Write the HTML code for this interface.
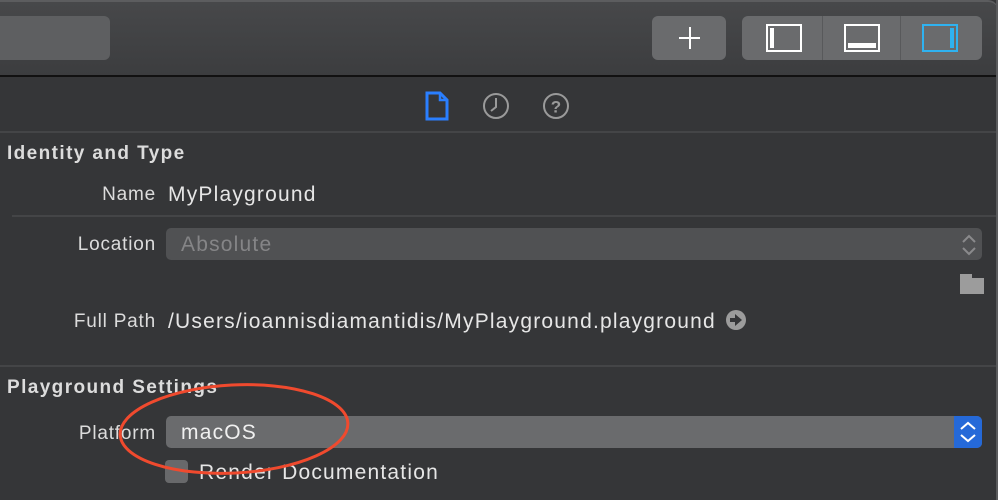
<!DOCTYPE html>
<html><head><meta charset="utf-8"><style>
*{margin:0;padding:0;box-sizing:border-box}
body{width:998px;height:500px;overflow:hidden;background:#353638;font-family:"Liberation Sans",sans-serif;position:relative;color:#dcdcdc}
.a{position:absolute}
.tb{left:0;top:0;width:998px;height:75px;background:linear-gradient(#47484a,#3c3d3f);border-top:2px solid #5c5d5f;border-top-right-radius:10px}
.btn{background:#6a6b6d;border-radius:6px}
.lbl{font-size:19px;letter-spacing:0.8px;color:#dcdcdc;text-align:right;width:156px;left:0}
.val{font-size:21px;letter-spacing:1.2px;color:#e6e6e6}
.hd{font-size:19px;letter-spacing:1.4px;font-weight:bold;color:#dcdcdc;left:7px}
.sep{height:2px;background:#444547}
</style></head><body>
<div class="a tb"></div>
<div class="a" style="left:0;top:75px;width:998px;height:2px;background:#111"></div>
<div class="a btn" style="left:-10px;top:16px;width:120px;height:44px;background:#5e5f61"></div>
<div class="a btn" style="left:652px;top:16px;width:74px;height:44px"></div>
<div class="a" style="left:679px;top:37px;width:21px;height:2px;background:#fff"></div>
<div class="a" style="left:688.5px;top:27px;width:2px;height:22px;background:#fff"></div>
<div class="a btn" style="left:742px;top:16px;width:240px;height:44px"></div>
<div class="a" style="left:822px;top:16px;width:1px;height:44px;background:#58595b"></div>
<div class="a" style="left:900px;top:16px;width:1px;height:44px;background:#58595b"></div>
<div class="a" style="left:766px;top:24px;width:36px;height:28px;border:2px solid #fff"></div>
<div class="a" style="left:770px;top:28px;width:4px;height:20px;background:#fff"></div>
<div class="a" style="left:844px;top:24px;width:36px;height:28px;border:2px solid #fff"></div>
<div class="a" style="left:848px;top:43px;width:28px;height:5px;background:#fff"></div>
<div class="a" style="left:922px;top:24px;width:36px;height:28px;border:2px solid #2fb2f0"></div>
<div class="a" style="left:950px;top:28px;width:4px;height:20px;background:#2fb2f0"></div>
<svg class="a" style="left:420px;top:88px" width="160" height="36">
<path d="M7 5 H20 L27 12 V31 H7 Z" fill="none" stroke="#2a7fff" stroke-width="3"/>
<path d="M20 5 V12 H27" fill="none" stroke="#2a7fff" stroke-width="2.5"/>
<circle cx="76" cy="18" r="12" fill="none" stroke="#9a9a9a" stroke-width="2"/>
<path d="M76 10 V19 L71 23" fill="none" stroke="#9a9a9a" stroke-width="2"/>
<circle cx="136" cy="18" r="12" fill="none" stroke="#9a9a9a" stroke-width="2"/>
<text x="136" y="24.5" font-family="Liberation Sans" font-size="17" font-weight="bold" fill="#9a9a9a" text-anchor="middle">?</text>
</svg>
<div class="a sep" style="left:0;top:131px;width:998px"></div>
<div class="a hd" style="top:143px">Identity and Type</div>
<div class="a lbl" style="top:184px">Name</div>
<div class="a val" style="left:168px;top:183px">MyPlayground</div>
<div class="a sep" style="left:12px;top:215px;width:986px"></div>
<div class="a lbl" style="top:234px">Location</div>
<div class="a" style="left:166px;top:228px;width:816px;height:32px;background:#505153;border-radius:5px"></div>
<div class="a val" style="left:181px;top:233px;color:#858587">Absolute</div>
<svg class="a" style="left:959px;top:234px" width="20" height="22"><path d="M4 8 L10 2 L16 8 M4 14 L10 20 L16 14" fill="none" stroke="#8a8a8c" stroke-width="2"/></svg>
<div class="a" style="left:960px;top:274px;width:12px;height:4px;background:#9c9c9c"></div>
<div class="a" style="left:960px;top:278px;width:24px;height:16px;background:#9c9c9c"></div>
<div class="a lbl" style="top:311px">Full Path</div>
<div class="a val" style="left:168px;top:310px">/Users/ioannisdiamantidis/MyPlayground.playground</div>
<svg class="a" style="left:726px;top:310px" width="20" height="20"><circle cx="10" cy="10" r="10" fill="#9c9c9c"/><path d="M4 8 H9 V4 L16 10 L9 16 V12 H4 Z" fill="#353638"/></svg>
<div class="a sep" style="left:0;top:365px;width:998px"></div>
<div class="a hd" style="top:377px">Playground Settings</div>
<div class="a lbl" style="top:423px">Platform</div>
<div class="a" style="left:166px;top:416px;width:816px;height:32px;background:#6a6b6d;border-radius:5px;overflow:hidden"><div class="a" style="right:0;top:0;width:28px;height:32px;background:#2569d8"></div></div>
<div class="a val" style="left:181px;top:421px;color:#f0f0f0">macOS</div>
<svg class="a" style="left:957px;top:421px" width="22" height="22"><path d="M4 8 L11 2 L18 8 M4 14 L11 20 L18 14" fill="none" stroke="#fff" stroke-width="2"/></svg>
<div class="a" style="left:165px;top:460px;width:23px;height:23px;background:#68696b;border-radius:4px"></div>
<div class="a val" style="left:199px;top:461px">Render Documentation</div>
<svg class="a" style="left:0;top:0" width="998" height="500"><ellipse cx="234" cy="429" rx="114" ry="44" transform="rotate(-3 234 429)" fill="none" stroke="#f04a2e" stroke-width="3"/></svg>
<div class="a" style="left:996px;top:0;width:2px;height:500px;background:#5a5b5d"></div>
</body></html>
